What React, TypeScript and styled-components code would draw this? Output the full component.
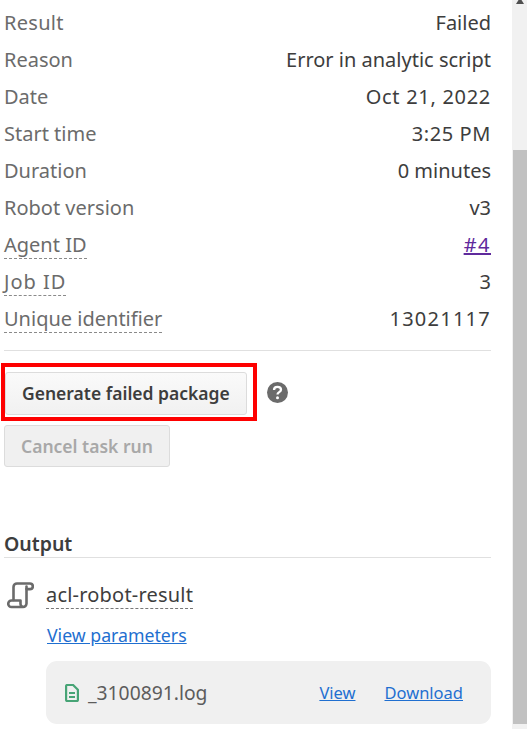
import styled, { createGlobalStyle } from 'styled-components';

const GlobalStyle = createGlobalStyle`
  html, body {
    margin: 0;
    padding: 0;
    background: #fff;
  }
`;

const Page = styled.div`
  display: flex;
  width: 529px;
  height: 729px;
  overflow: hidden;
  font-family: 'Noto Sans', 'Liberation Sans', sans-serif;
  font-size: 20px;
  color: #3d3d3d;
`;

const Content = styled.main`
  flex: 1;
  min-width: 0;
  padding: 0 21px 0 4px;
`;

const Details = styled.dl`
  margin: 0;
  padding: 4px 0 13px;
  border-bottom: 1px solid #e0e0e0;
`;

const Row = styled.div`
  display: flex;
  justify-content: space-between;
  align-items: center;
  height: 37px;
`;

const Label = styled.dt<{ $dashed?: boolean; $tracking?: number }>`
  color: #6b6b6b;
  line-height: 26px;
  letter-spacing: ${({ $tracking }) => $tracking ?? 0}px;
  padding-top: ${({ $dashed }) => ($dashed ? '2px' : '0')};
  border-bottom: ${({ $dashed }) => ($dashed ? '1px dashed #8a8a8a' : 'none')};
`;

const Value = styled.dd<{ $tracking?: number }>`
  margin: 0;
  letter-spacing: ${({ $tracking }) => $tracking ?? 0}px;
`;

const VisitedLink = styled.a`
  color: #5f2a9c;
  text-decoration: underline;
`;

const Actions = styled.div`
  display: flex;
  flex-direction: column;
  align-items: flex-start;
  gap: 4px;
  padding-top: 12px;
`;

const ActionRow = styled.div`
  display: flex;
  align-items: center;
  gap: 10px;
`;

const Highlight = styled.div`
  margin-left: -3px;
  padding: 5px 6px 2px 0;
  border: 4px solid #fe0000;
`;

const Button = styled.button<{ $disabled?: boolean }>`
  display: block;
  height: ${({ $disabled }) => ($disabled ? '42px' : '43px')};
  padding: ${({ $disabled }) => ($disabled ? '0 16px' : '0 16px 2px')};
  border: 1px solid #dcdcdc;
  border-radius: 3px;
  background: ${({ $disabled }) => ($disabled ? '#f0f0f0' : 'linear-gradient(#fafafa, #f1f1f1)')};
  color: ${({ $disabled }) => ($disabled ? '#a8a8a8' : '#3d3d3d')};
  font: 600 17.5px 'Noto Sans', 'Liberation Sans', sans-serif;
`;

const OutputTitle = styled.h2`
  margin: 64px 0 0;
  font-size: 19.5px;
  font-weight: 600;
  line-height: 26px;
  border-bottom: 1px solid #e0e0e0;
`;

const Robot = styled.div`
  display: flex;
  align-items: center;
  gap: 12px;
  padding: 24px 0 0 3px;
`;

const RobotName = styled.span`
  line-height: 26px;
  letter-spacing: 0.2px;
  border-bottom: 1px dashed #777;
`;

const BlueLink = styled.a`
  color: #1f6fd0;
  text-decoration: underline;
`;

const ParamsLink = styled(BlueLink)`
  display: block;
  margin: 14px 0 0 43px;
  font-size: 17.7px;
  line-height: 24px;
`;

const FileCard = styled.div`
  display: flex;
  align-items: center;
  height: 63px;
  margin: 14px 0 0 42px;
  padding: 0 28px 0 19px;
  border-radius: 11px;
  background: #f0f0f0;
`;

const FileName = styled.span`
  flex: 1;
  margin-left: 9px;
  font-size: 19.3px;
  color: #5c5c5c;
`;

const FileLinks = styled.div`
  display: flex;
  gap: 29px;
  font-size: 16.5px;
`;

const ScrollTrack = styled.aside`
  display: flex;
  flex-direction: column;
  width: 15px;
  margin-right: 2px;
  flex-shrink: 0;
  background: #f1f1f1;
`;

const ScrollArrow = styled.div`
  display: flex;
  justify-content: center;
  height: 17px;
  flex-shrink: 0;
`;

const ScrollThumb = styled.div`
  height: 574px;
  margin: 133px 0 0 1px;
  background: #c1c1c1;
`;

const rows: {
  label: string;
  value: string;
  dashed?: boolean;
  link?: boolean;
  labelTracking?: number;
  valueTracking?: number;
}[] = [
  { label: 'Result', value: 'Failed', labelTracking: 0.3 },
  { label: 'Reason', value: 'Error in analytic script' },
  { label: 'Date', value: 'Oct 21, 2022', valueTracking: 0.7 },
  { label: 'Start time', value: '3:25 PM', valueTracking: 0.6 },
  { label: 'Duration', value: '0 minutes' },
  { label: 'Robot version', value: 'v3' },
  { label: 'Agent ID', value: '#4', dashed: true, link: true, valueTracking: 1.5 },
  { label: 'Job ID', value: '3', dashed: true, labelTracking: 1 },
  { label: 'Unique identifier', value: '13021117', dashed: true, valueTracking: 1.25 },
];

const HelpIcon = () => (
  <svg width="21" height="21" viewBox="0 0 21 21">
    <circle cx="10.5" cy="10.5" r="10.5" fill="#6b6b6b" />
    <path
      d="M7 8c0-2 1.500-3.200 3.500-3.200S14 6 14 7.700c0 2.500-3.500 2.400-3.500 4.800"
      fill="none"
      stroke="#fff"
      strokeWidth="2.3"
    />
    <circle cx="10.5" cy="15.8" r="1.5" fill="#fff" />
  </svg>
);

const ScrollIcon = () => (
  <svg width="27" height="27" viewBox="0 0 27 27" fill="none" stroke="#6b6b6b" strokeWidth="2.6" strokeLinecap="round" strokeLinejoin="round">
    <path d="M6.500 18V5a3.500 3.500 0 0 1 3.500-3.500h13a2.800 2.800 0 0 1 0 5.600h-3.500" />
    <path d="M19.500 4.500V21.500a3.500 3.500 0 0 1-3.500 3.500H4.500a3.200 3.200 0 0 1 0-6.500H13.500v3a3.200 3.200 0 0 0 3 3.500" />
  </svg>
);

const FileIcon = () => (
  <svg width="14" height="18" viewBox="0 0 14 18" fill="none" stroke="#47a476" strokeWidth="2.2" strokeLinejoin="round">
    <path d="M1.100 2a1 1 0 0 1 1-1h6l4.800 4.800V16a1 1 0 0 1-1 1H2.100a1 1 0 0 1-1-1z" />
    <path d="M4 9h6M4 13h6" strokeWidth="1.8" />
  </svg>
);

export default function App() {
  return (
    <>
      <GlobalStyle />
      <Page>
        <Content>
          <Details>
            {rows.map((row) => (
              <Row key={row.label}>
                <Label $dashed={row.dashed} $tracking={row.labelTracking}>{row.label}</Label>
                <Value $tracking={row.valueTracking}>
                  {row.link ? <VisitedLink href="#4">{row.value}</VisitedLink> : row.value}
                </Value>
              </Row>
            ))}
          </Details>
          <Actions>
            <ActionRow>
              <Highlight>
                <Button>Generate failed package</Button>
              </Highlight>
              <HelpIcon />
            </ActionRow>
            <Button $disabled>Cancel task run</Button>
          </Actions>
          <OutputTitle>Output</OutputTitle>
          <Robot>
            <ScrollIcon />
            <RobotName>acl-robot-result</RobotName>
          </Robot>
          <ParamsLink href="#parameters">View parameters</ParamsLink>
          <FileCard>
            <FileIcon />
            <FileName>_3100891.log</FileName>
            <FileLinks>
              <BlueLink href="#view">View</BlueLink>
              <BlueLink href="#download">Download</BlueLink>
            </FileLinks>
          </FileCard>
        </Content>
        <ScrollTrack>
          <ScrollArrow>
            <svg width="8" height="4" viewBox="0 0 8 4">
              <path d="M2.500 0h3L8 4H0z" fill="#505050" />
            </svg>
          </ScrollArrow>
          <ScrollThumb />
        </ScrollTrack>
      </Page>
    </>
  );
}
